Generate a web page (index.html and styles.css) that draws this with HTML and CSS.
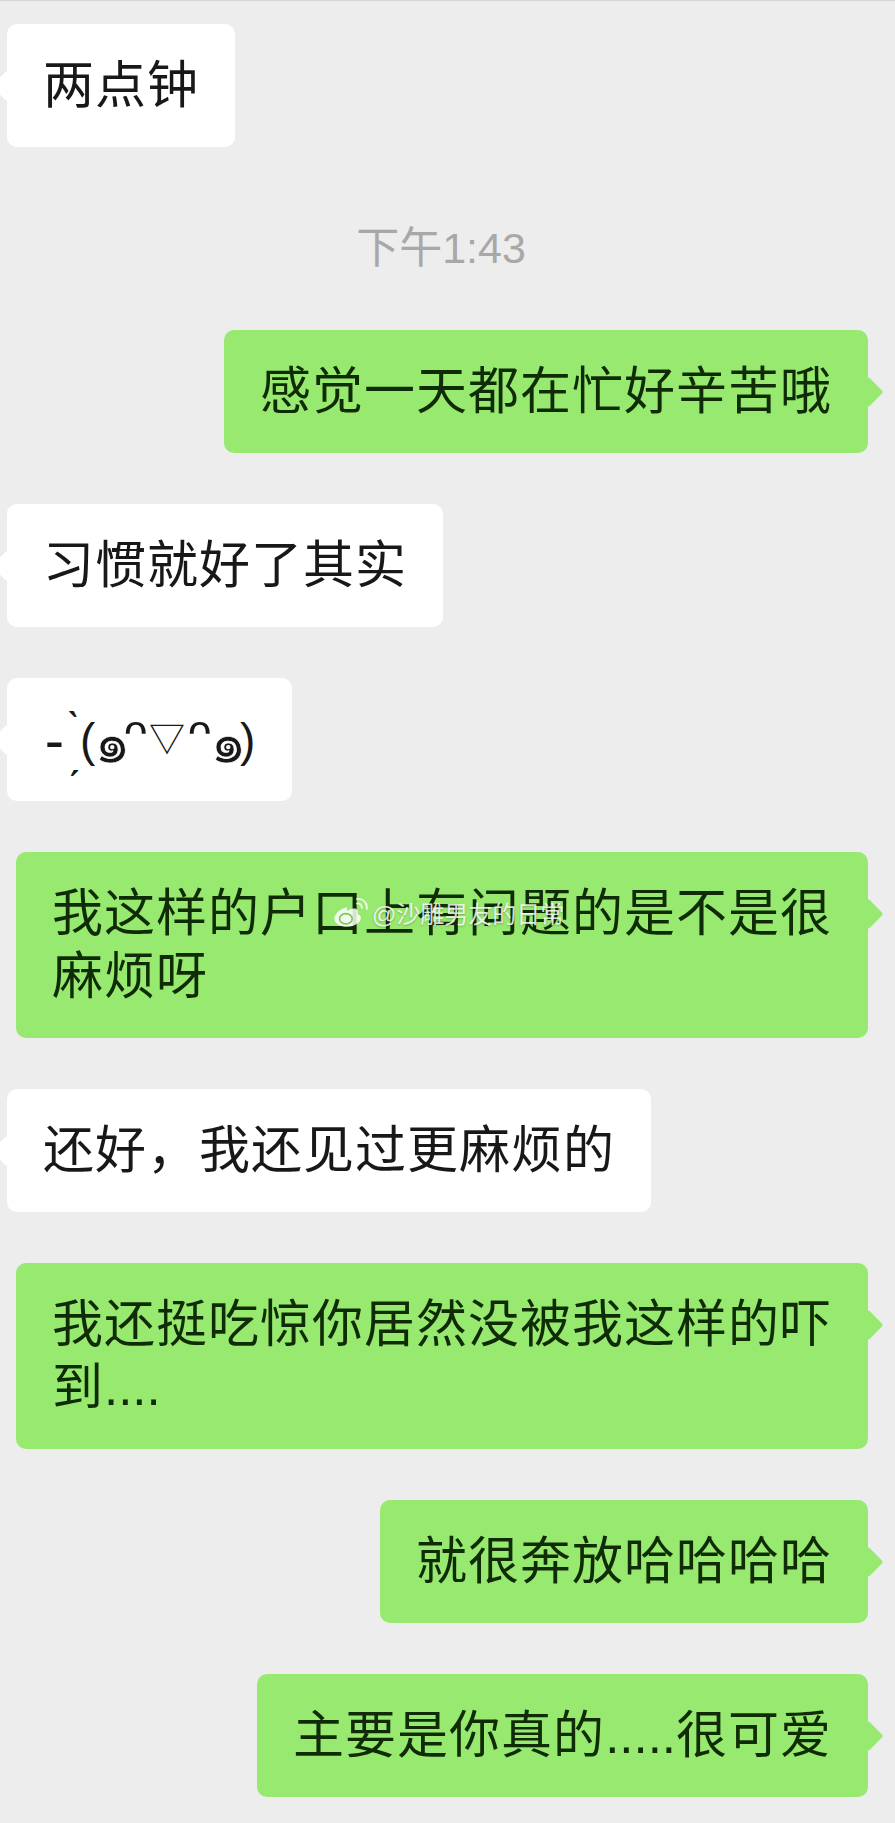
FILE: index.html
```html
<!DOCTYPE html>
<html>
<head>
	<meta charset="UTF-8">
	<meta name="viewport" content="width=device-width, initial-scale=1.0">
	<title>聊天记录</title>
	<link rel="stylesheet" href="styles.css">
</head>
<body>
	<div class="chat">
		<div class="msg left">两点钟</div>
		<div class="time">下午1:43</div>
		<div class="msg right">感觉一天都在忙好辛苦哦</div>
		<div class="msg left">习惯就好了其实</div>
		<div class="msg left">
			<div class="face">
				<span class="dash">-</span>
				<span class="side"><span>ˋ</span><span>ˏ</span></span>
				<span class="paren">(</span>
				<span class="eye">๑</span>
				<span class="brow">ᵔ</span>
				<span class="nose">▽</span>
				<span class="brow">ᵔ</span>
				<span class="eye">๑</span>
				<span class="paren">)</span>
			</div>
		</div>
		<div class="msg right">我这样的户口上有问题的是不是很麻烦呀</div>
		<div class="msg left">还好，我还见过更麻烦的</div>
		<div class="msg right">我还挺吃惊你居然没被我这样的吓到<span class="dots">....</span></div>
		<div class="msg right">就很奔放哈哈哈哈</div>
		<div class="msg right">主要是你真的<span class="dots">.....</span>很可爱</div>
	</div>

	<div class="watermark">
		<svg class="weibo" viewBox="0 0 30 26" width="35" height="30">
			<path d="M12 8C6 9 1 14 1 18c0 4 5 7 11 7 7 0 12-4 12-8 0-2-2-3-3-3 1-3 0-5-3-5-2 0-4 1-6 2 0-2-0-3 0-3z" fill="#fff" fill-opacity="0.85"/>
			<ellipse cx="11" cy="18" rx="5.5" ry="4.5" fill="none" stroke="#7cc45a" stroke-width="1.4"/>
			<path d="M20 5c3-1 5 1 5 4M20 1c6-1 10 3 9 9" fill="none" stroke="#fff" stroke-opacity="0.85" stroke-width="1.5"/>
		</svg>
		<span>@沙雕男友的日常</span>
	</div>
</body>
</html>
```

FILE: styles.css
```css
body {
	margin: 0;
	background-color: #ededed;
	font-family: "Liberation Sans", "Noto Sans CJK SC", sans-serif;
}

.chat {
	display: flex;
	flex-direction: column;
	align-items: flex-start;
	gap: 51px;
	padding: 23px 27px 26px 7px;
	border-top: 1px solid #d6d6d6;
}

.msg {
	position: relative;
	box-sizing: border-box;
	max-width: 852px;
	padding: 30px 36px;
	border-radius: 10px;
	font-size: 51px;
	letter-spacing: 1px;
	line-height: 63px;
	color: #181818;
	background-color: #fff;
}

/* tail stays level with the first line */
.msg::after {
	content: "";
	position: absolute;
	top: 51px;
	width: 22px;
	height: 22px;
	background-color: inherit;
	transform: rotate(45deg);
	border-radius: 3px;
}

.left::after {
	left: -11px;
}

.right {
	align-self: flex-end;
	color: #0f2c07;
	background-color: #98e96f;
}

.right::after {
	right: -11px;
}

.dots {
	letter-spacing: 0;
}

.time {
	align-self: center;
	margin: 24px 0 5px 7px;
	font-size: 43px;
	letter-spacing: 0;
	line-height: 52px;
	color: #a8a8a8;
}

.face {
	display: flex;
	align-items: center;
	width: 213px;
	height: 63px;
	letter-spacing: 0;
	line-height: 1;
}

.dash {
	width: 23px;
	font-size: 58px;
	text-align: center;
}

.side {
	display: flex;
	flex-direction: column;
	width: 14px;
	font-size: 44px;
	line-height: 24px;
}

.paren {
	flex: none;
	width: 14px;
	font-size: 46px;
	text-align: center;
}

.eye {
	flex: none;
	width: 30px;
	padding-top: 6px;
	font-size: 58px;
	-webkit-text-stroke: 0.7px #fff;
	text-align: center;
}

.brow {
	flex: none;
	align-self: flex-start;
	width: 22px;
	font-size: 62px;
	text-align: center;
}

.nose {
	flex: none;
	width: 42px;
	font-size: 36px;
	text-align: center;
}

.watermark {
	position: absolute;
	left: 333px;
	top: 895px;
	display: flex;
	align-items: center;
	gap: 4px;
	font-size: 24px;
	color: rgba(255, 255, 255, 0.85);
	text-shadow: 0 1px 2px rgba(0, 0, 0, 0.25);
}
```
